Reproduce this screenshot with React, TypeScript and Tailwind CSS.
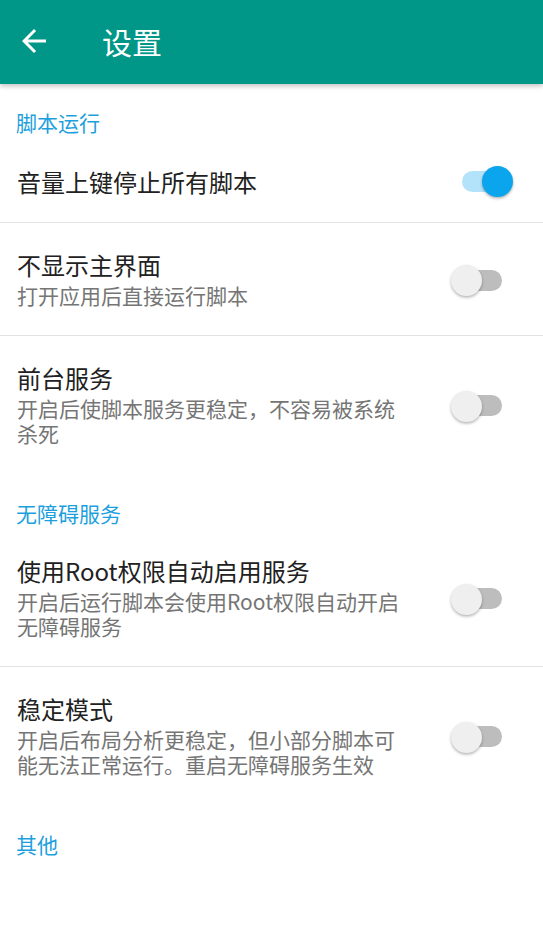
import React from "react";

const font = { fontFamily: '"Noto Sans CJK SC", "Noto Sans", sans-serif' };

function Switch({ on }: { on: boolean }) {
  return (
    <div className="relative w-[64px] h-[32px] shrink-0">
      <div
        className={
          "absolute left-[12px] top-[5.5px] w-[40px] h-[21px] rounded-full " +
          (on ? "bg-[#b3e3fb]" : "bg-[#bdbdbd]")
        }
      />
      <div
        className={
          "absolute top-[1px] w-[31px] h-[31px] rounded-full shadow-[0_1.5px_3px_rgba(0,0,0,0.3)] " +
          (on ? "left-[32px] bg-[#0aa5ec]" : "left-[1px] bg-[#efefef]")
        }
      />
    </div>
  );
}

function Category({ title }: { title: string }) {
  return (
    <div className="pt-[24px] pb-[2px] pl-[16px]">
      <div className="text-[21px] leading-[28px] text-[#1d9fdd]">{title}</div>
    </div>
  );
}

function Row({
  title,
  sub,
  on = false,
  last = false,
}: {
  title: string;
  sub: string;
  on?: boolean;
  last?: boolean;
}) {
  return (
    <div
      className={
        "flex items-center pl-[17px] pt-[25px] " +
        (last ? "pb-[29px]" : "pb-[27px] border-b border-[#e2e2e2]")
      }
    >
      <div className="w-[394px]">
        <div className="text-[24px] leading-[33px] text-[#212121]">{title}</div>
        <div className="mt-[2px] text-[21px] leading-[25px] text-[#757575]">{sub}</div>
      </div>
      <div className="ml-[39px] pt-[4px]">
        <Switch on={on} />
      </div>
    </div>
  );
}

export default function App() {
  return (
    <div className="w-[543px] h-[930px] bg-white overflow-hidden" style={font}>
      <div className="relative h-[84px] bg-[#009688] flex items-center shadow-[0_2px_5px_rgba(0,0,0,0.25)] z-10">
        <div className="w-[102px] pl-[16px] flex items-center">
          <svg width="36" height="36" viewBox="0 0 24 24" className="mt-[-2px]">
            <path
              d="M20 11H7.83l5.59-5.59L12 4l-8 8 8 8 1.41-1.41L7.83 13H20v-2z"
              fill="#ffffff"
            />
          </svg>
        </div>
        <div className="text-[30px] leading-[40px] text-white mt-[-2px]">设置</div>
      </div>

      <Category title="脚本运行" />
      <div className="flex items-center h-[85px] pl-[17px] border-b border-[#e2e2e2]">
        <div className="w-[394px] text-[24px] leading-[33px] text-[#212121] pt-[3px]">
          音量上键停止所有脚本
        </div>
        <div className="ml-[39px] pt-[2px]">
          <Switch on={true} />
        </div>
      </div>
      <Row title="不显示主界面" sub="打开应用后直接运行脚本" />
      <Row title="前台服务" sub="开启后使脚本服务更稳定，不容易被系统杀死" last />

      <Category title="无障碍服务" />
      <Row title="使用Root权限自动启用服务" sub="开启后运行脚本会使用Root权限自动开启无障碍服务" />
      <Row
        title="稳定模式"
        sub="开启后布局分析更稳定，但小部分脚本可能无法正常运行。重启无障碍服务生效"
        last
      />

      <Category title="其他" />
    </div>
  );
}
